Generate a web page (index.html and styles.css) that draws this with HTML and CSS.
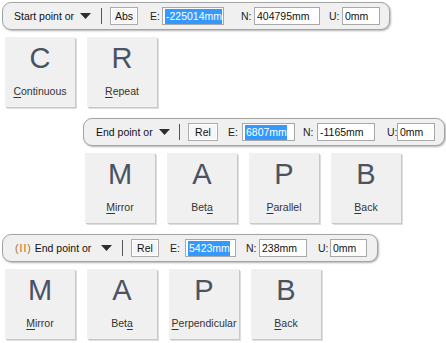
FILE: index.html
```html
<!DOCTYPE html>
<html>
<head>
<meta charset="utf-8">
<link rel="stylesheet" href="styles.css">
</head>
<body>
<div class="page">
  <section class="group group-1">
    <div class="bar">
      <span class="prompt">Start point or</span>
      <svg class="tri" width="11" height="6" viewBox="0 0 11 6"><polygon points="0,0 11,0 5.5,6"/></svg>
      <span class="sep"></span>
      <span class="tog">Abs</span>
      <span class="field f-e"><span class="lbl">E:</span><span class="box"><span class="sel">-225014mm</span></span></span>
      <span class="field f-n"><span class="lbl">N:</span><span class="box">404795mm</span></span>
      <span class="field f-u"><span class="lbl">U:</span><span class="box">0mm</span></span>
    </div>
    <div class="keys">
      <div class="key"><span class="key-ch">C</span><span class="key-lb"><u>C</u>ontinuous</span></div>
      <div class="key"><span class="key-ch">R</span><span class="key-lb"><u>R</u>epeat</span></div>
    </div>
  </section>

  <section class="group group-2">
    <div class="bar">
      <span class="prompt">End point or</span>
      <svg class="tri" width="11" height="6" viewBox="0 0 11 6"><polygon points="0,0 11,0 5.5,6"/></svg>
      <span class="sep"></span>
      <span class="tog">Rel</span>
      <span class="field f-e"><span class="lbl">E:</span><span class="box"><span class="sel">6807mm</span></span></span>
      <span class="field f-n"><span class="lbl">N:</span><span class="box">-1165mm</span></span>
      <span class="field f-u"><span class="lbl">U:</span><span class="box">0mm</span></span>
    </div>
    <div class="keys">
      <div class="key"><span class="key-ch">M</span><span class="key-lb"><u>M</u>irror</span></div>
      <div class="key"><span class="key-ch">A</span><span class="key-lb">Bet<u>a</u></span></div>
      <div class="key"><span class="key-ch">P</span><span class="key-lb"><u>P</u>arallel</span></div>
      <div class="key"><span class="key-ch">B</span><span class="key-lb"><u>B</u>ack</span></div>
    </div>
  </section>

  <section class="group group-3">
    <div class="bar">
      <span class="prompt"><span class="mark">(II)</span> End point or</span>
      <svg class="tri" width="11" height="6" viewBox="0 0 11 6"><polygon points="0,0 11,0 5.5,6"/></svg>
      <span class="sep"></span>
      <span class="tog">Rel</span>
      <span class="field f-e"><span class="lbl">E:</span><span class="box"><span class="sel">5423mm</span></span></span>
      <span class="field f-n"><span class="lbl">N:</span><span class="box">238mm</span></span>
      <span class="field f-u"><span class="lbl">U:</span><span class="box">0mm</span></span>
    </div>
    <div class="keys">
      <div class="key"><span class="key-ch">M</span><span class="key-lb"><u>M</u>irror</span></div>
      <div class="key"><span class="key-ch">A</span><span class="key-lb">Bet<u>a</u></span></div>
      <div class="key"><span class="key-ch">P</span><span class="key-lb"><u>P</u>erpendicular</span></div>
      <div class="key"><span class="key-ch">B</span><span class="key-lb"><u>B</u>ack</span></div>
    </div>
  </section>
</div>
</body>
</html>
```

FILE: styles.css
```css
* { box-sizing: border-box; }

body {
  margin: 0;
  background: #ffffff;
  font-family: "Liberation Sans", Arial, sans-serif;
}

.page {
  display: flex;
  flex-direction: column;
  align-items: flex-start;
  padding-top: 2px;
}

.group {
  display: flex;
  flex-direction: column;
  align-items: flex-start;
  margin-left: 2px;
  margin-bottom: 11px;
}
.group-2 { margin-left: 83px; }

.bar {
  display: flex;
  align-items: center;
  height: 28px;
  padding: 0 9px 0 11px;
  margin-bottom: 7px;
  background: #f0f0f0;
  border: 1px solid #a4a4a4;
  border-radius: 9px;
  box-shadow: 1px 1px 2px rgba(0, 0, 0, 0.3);
  font-size: 10.5px;
  color: #111;
}
.group-2 .bar, .group-3 .bar { padding-left: 12px; }
.group-3 .bar { padding-right: 10px; }

.prompt { white-space: nowrap; width: 66px; }
.group-2 .prompt { width: 63px; }
.group-3 .prompt { width: 86px; }

.mark { color: #b86a1e; letter-spacing: 1px; }

.tri { display: block; fill: #2e2e2e; }

.sep {
  width: 1px;
  height: 16px;
  margin-left: 10px;
  background: #555;
}
.group-2 .sep { margin-left: 9px; }

.tog {
  margin-left: 8px;
  width: 28px;
  height: 18px;
  display: flex;
  align-items: center;
  justify-content: center;
  background: #f6f6f6;
  border: 1px solid #acacac;
  box-shadow: inset 0 0 0 1px #ffffff;
  color: #111;
}
.group-2 .tog { width: 30px; }

.field { display: flex; align-items: center; }
.lbl { color: #222; white-space: nowrap; }

.box {
  height: 18px;
  display: flex;
  align-items: center;
  padding-left: 2px;
  background: #fff;
  border: 1px solid #a8a8a8;
  white-space: nowrap;
  overflow: hidden;
  color: #111;
}
.sel {
  display: inline-block;
  line-height: 15px;
  padding-left: 1px;
  background: #3399ff;
  color: #fff;
}

/* toolbar 1 */
.group-1 .f-e .lbl { margin-left: 12px; width: 12px; }
.group-1 .f-e .box { width: 62px; }
.group-1 .f-n .lbl { margin-left: 17px; width: 13px; }
.group-1 .f-n .box { width: 66px; }
.group-1 .f-u .lbl { margin-left: 9px; width: 13px; }
.group-1 .f-u .box { width: 38px; }

/* toolbar 2 */
.group-2 .f-e .lbl { margin-left: 10px; width: 14px; }
.group-2 .f-e .box { width: 53px; }
.group-2 .f-n .lbl { margin-left: 8px; width: 14px; }
.group-2 .f-n .box { width: 58px; }
.group-2 .f-u .lbl { margin-left: 12px; width: 10px; }
.group-2 .f-u .box { width: 38px; }

/* toolbar 3 */
.group-3 .f-e .lbl { margin-left: 11px; width: 15px; }
.group-3 .f-e .box { width: 51px; }
.group-3 .f-n .lbl { margin-left: 10px; width: 13px; }
.group-3 .f-n .box { width: 48px; }
.group-3 .f-u .lbl { margin-left: 11px; width: 12px; }
.group-3 .f-u .box { width: 37px; }

.keys {
  display: flex;
  gap: 12px;
  margin-left: 3px;
}
.group-2 .keys { margin-left: 2px; }

.key {
  width: 70px;
  height: 70px;
  display: flex;
  flex-direction: column;
  align-items: center;
  padding-top: 7px;
  background: #f0f0f0;
  box-shadow: 1px 1px 0 #c9c9c9, 2px 2px 0 #dedede;
}
.key-ch {
  font-size: 29px;
  line-height: 28px;
  color: #4a5362;
}
.key-lb {
  margin-top: 13px;
  font-size: 10.5px;
  line-height: 13px;
  color: #333;
  white-space: nowrap;
}
.key-lb u { text-underline-offset: 2px; }
```
